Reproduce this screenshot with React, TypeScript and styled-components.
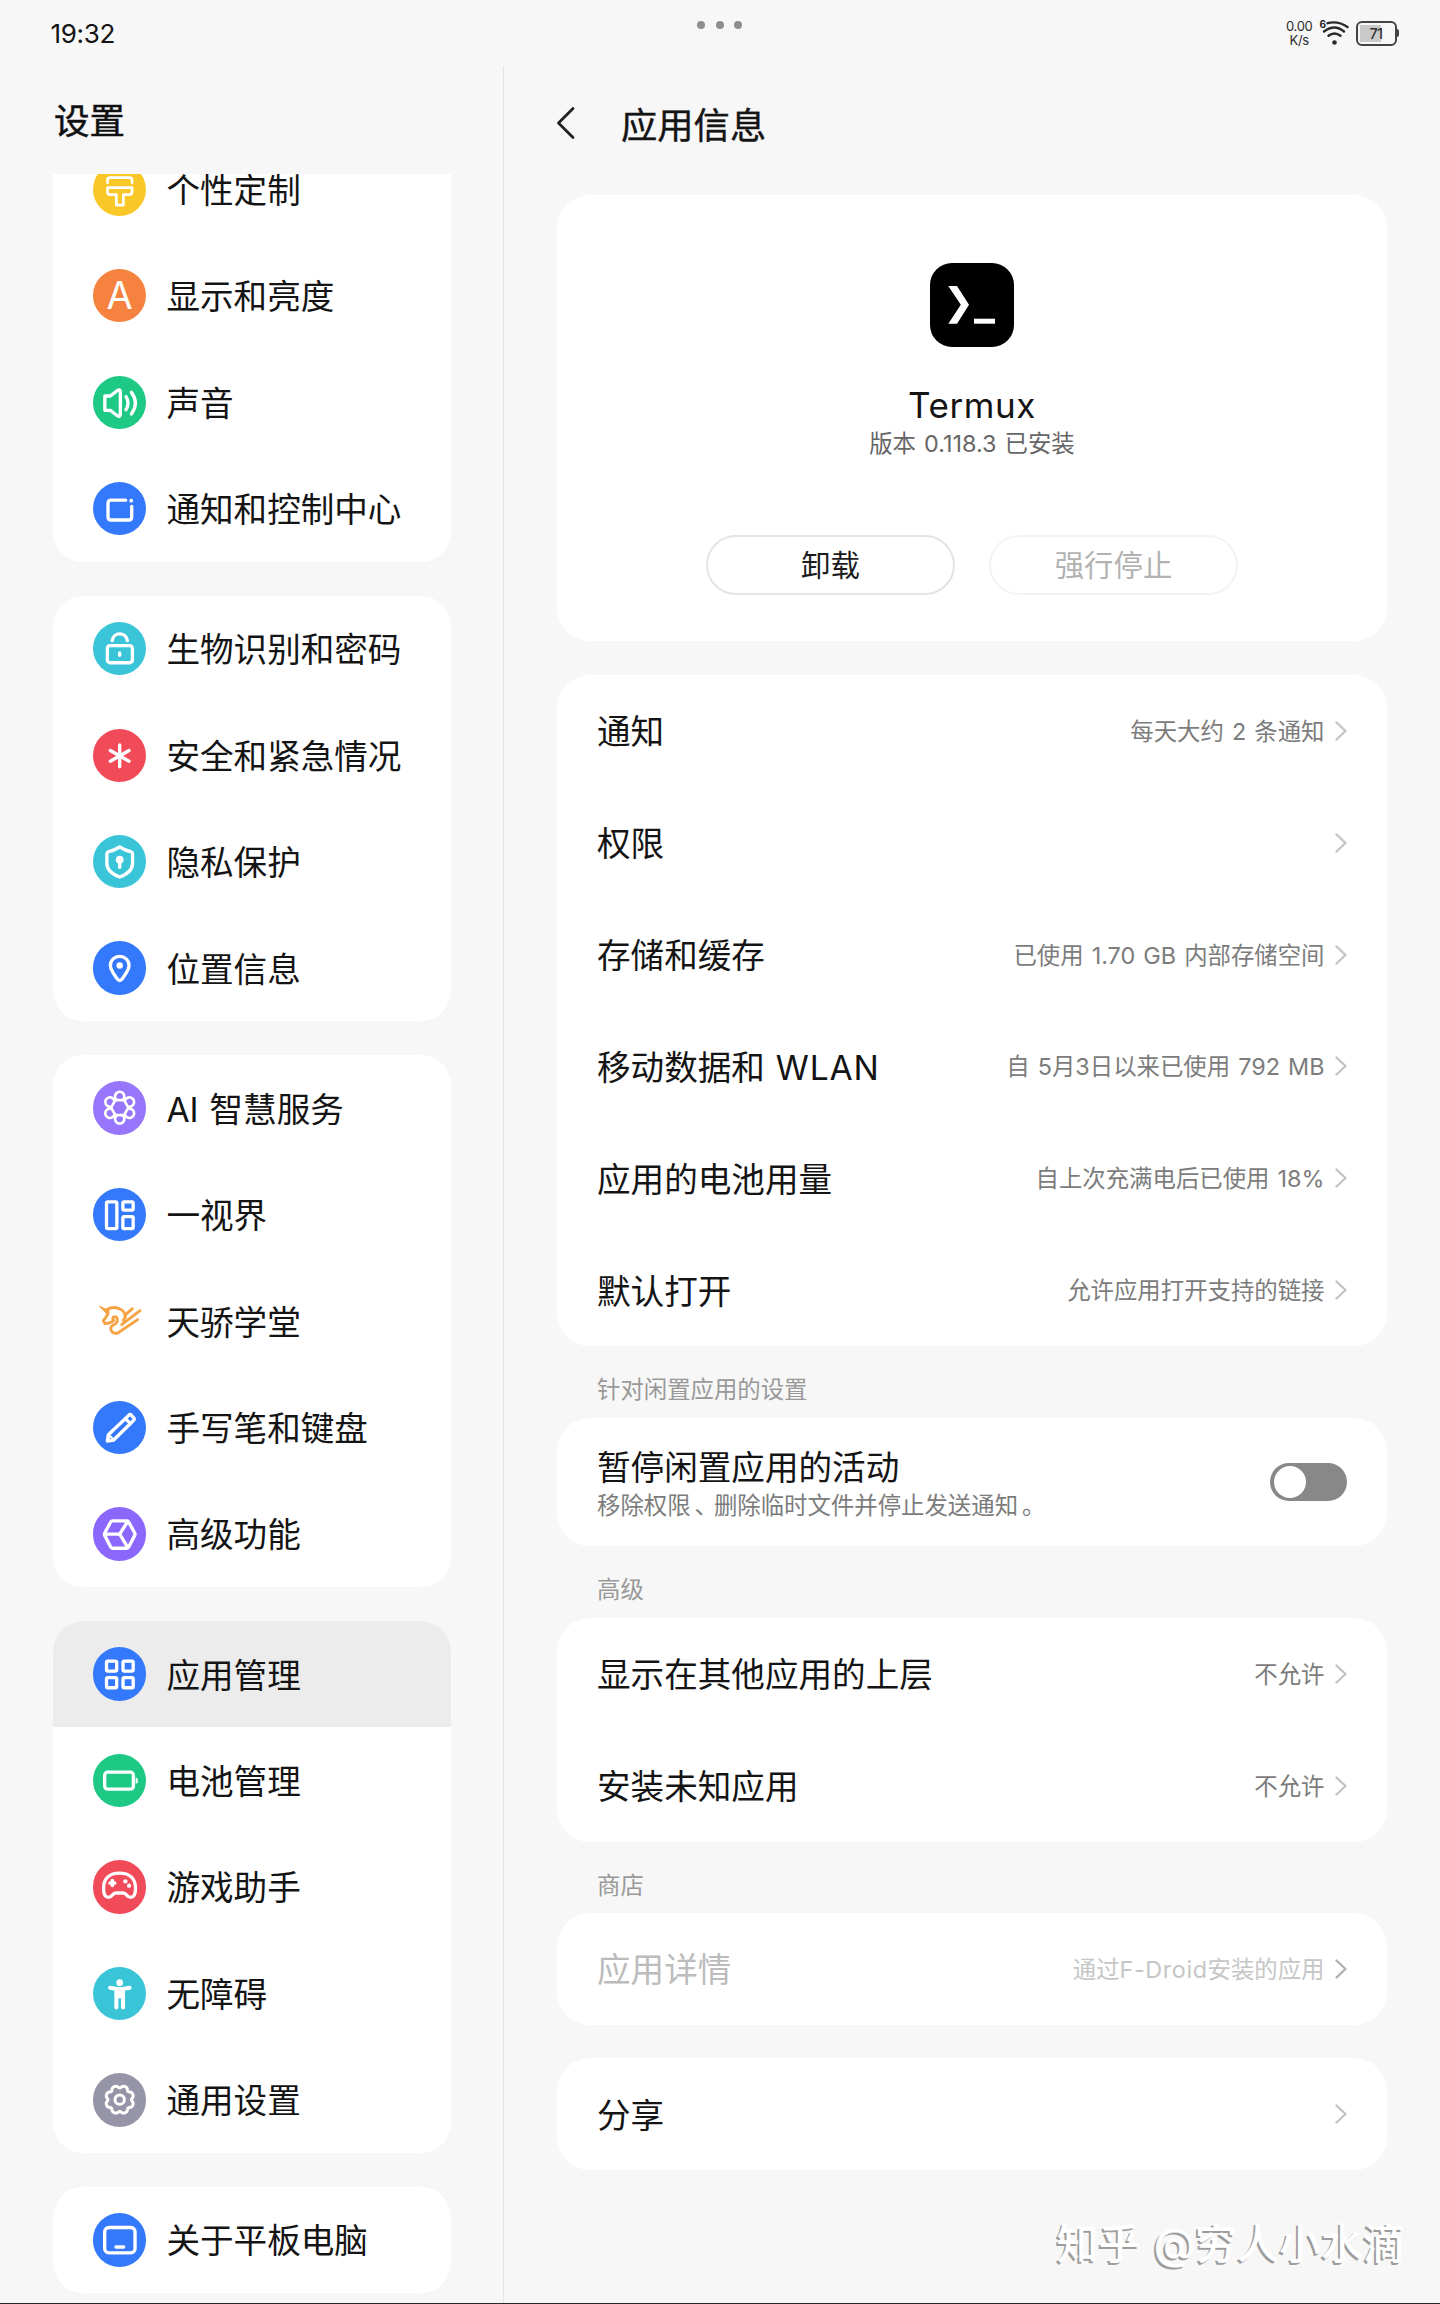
import React from 'react';
import styled, { createGlobalStyle, css } from 'styled-components';

const GlobalStyle = createGlobalStyle`
  * { box-sizing: border-box; }
  html, body { margin: 0; padding: 0; background: #f7f7f7; }
  body {
    font-family: Inter, "Noto Sans CJK SC", sans-serif;
    color: #141414;
    word-spacing: 1.5px;
    -webkit-font-smoothing: antialiased;
  }
`;

const Screen = styled.div`
  position: relative;
  width: 1440px;
  height: 2304px;
  overflow: hidden;
  display: flex;
  flex-direction: column;
  background: #f7f7f7;
  border-bottom: 1px solid #2a2a2a;
`;

/* ---------- status bar ---------- */

const StatusBar = styled.header`
  flex: none;
  height: 66px;
  padding: 0 41px 0 50.5px;
  display: grid;
  grid-template-columns: 1fr auto 1fr;
`;

const Clock = styled.div`
  font-size: 26px;
  line-height: 34px;
  padding-top: 17px;
  letter-spacing: -0.3px;
`;

const Dots = styled.div`
  display: flex;
  gap: 10.5px;
  padding-top: 21px;
  margin-left: -10px;
`;

const Dot = styled.i`
  width: 8px;
  height: 8px;
  border-radius: 50%;
  background: #8e8e8e;
`;

const StatusRight = styled.div`
  display: flex;
  justify-content: flex-end;
  align-items: flex-start;
`;

const NetSpeed = styled.div`
  margin: 20px 7px 0 0;
  font-size: 13px;
  line-height: 13.8px;
  text-align: center;
  letter-spacing: -0.3px;
  color: #2b2b2b;
`;

const WifiWrap = styled.div`
  display: flex;
  margin: 20px 6.5px 0 0;
`;

const WifiGen = styled.span`
  font-size: 10px;
  line-height: 8px;
  font-weight: 700;
  margin-right: -5px;
  color: #222;
`;

const Battery = styled.div`
  display: flex;
  align-items: center;
  margin-top: 20.5px;
`;

const BatteryCell = styled.div`
  width: 41px;
  height: 25px;
  border: 2.5px solid #444;
  border-radius: 6px;
  display: flex;
  align-items: center;
  justify-content: center;
  font-size: 14.5px;
  font-weight: 500;
  letter-spacing: -0.6px;
  color: #333;
  background: linear-gradient(#c9c9c9, #c9c9c9) 2px 2px / 21px calc(100% - 4px) no-repeat;
`;

const BatteryNub = styled.div`
  width: 2.5px;
  height: 8px;
  border-radius: 0 2px 2px 0;
  background: #444;
`;

/* ---------- layout ---------- */

const Body = styled.div`
  flex: 1;
  min-height: 0;
  display: flex;
`;

const Sidebar = styled.nav`
  flex: none;
  width: 504px;
  border-right: 1px solid #e4e4e4;
  padding: 0 52px 0 53px;
  display: flex;
  flex-direction: column;
`;

const SidebarTitle = styled.h1`
  flex: none;
  margin: 0;
  height: 108px;
  padding: 36px 0 0 1px;
  font-size: 35.5px;
  line-height: 40px;
  font-weight: 400;
  -webkit-text-stroke: 0.5px #101010;
  color: #101010;
`;

const SidebarScroll = styled.div`
  flex: 1;
  min-height: 0;
  overflow: hidden;
`;

const SidebarList = styled.div`
  margin-top: -37.9px;
  display: flex;
  flex-direction: column;
  gap: 33.6px;
`;

const NavCard = styled.section`
  border-radius: 30px;
  background: #fff;
  overflow: hidden;
`;

const NavItem = styled.div<{ $active?: boolean }>`
  height: 106.46px;
  padding-left: 40px;
  display: flex;
  align-items: center;
  gap: 20px;
  background: ${(p) => (p.$active ? '#ececec' : 'transparent')};
`;

const NavLabel = styled.span`
  font-size: 33.6px;
  line-height: 32px;
  padding-top: 3px;
  white-space: nowrap;
`;

const Badge = styled.div<{ $color: string }>`
  flex: none;
  width: 53.4px;
  height: 53.4px;
  border-radius: 50%;
  background: ${(p) => p.$color};
  display: flex;
  align-items: center;
  justify-content: center;
  svg {
    width: 100%;
    height: 100%;
    fill: none;
    stroke: #fff;
    stroke-width: 10;
    stroke-linecap: round;
    stroke-linejoin: round;
  }
`;

const BadgeLetter = styled.span`
  font-size: 38px;
  line-height: 53px;
  font-weight: 400;
  color: #fff;
`;

/* ---------- detail pane ---------- */

const Detail = styled.main`
  flex: 1;
  min-width: 0;
  padding: 0 53px 0 53px;
`;

const DetailHeader = styled.div`
  height: 128.8px;
  padding: 38px 0 0 0;
  display: flex;
  align-items: flex-start;
  gap: 44px;
  svg {
    margin: 2px 1px 0 -1px;
  }
`;

const DetailTitle = styled.h2`
  margin: 0;
  font-size: 36.3px;
  line-height: 44px;
  font-weight: 400;
  -webkit-text-stroke: 0.4px #141414;
`;

const Card = styled.section`
  border-radius: 33px;
  background: #fff;
`;

const AppCard = styled(Card)`
  height: 446.5px;
  padding-top: 68.2px;
  display: flex;
  flex-direction: column;
  align-items: center;
  margin-bottom: 33.5px;
`;

const AppIcon = styled.div`
  width: 84px;
  height: 84px;
  border-radius: 22px;
  background: #000;
  svg { display: block; }
`;

const AppName = styled.div`
  margin-top: 37px;
  font-size: 35px;
  line-height: 42px;
  letter-spacing: 0.6px;
`;

const AppVersion = styled.div`
  margin-top: 3px;
  font-size: 23.4px;
  line-height: 30px;
  color: #666;
`;

const Actions = styled.div`
  margin-top: 76px;
  display: flex;
  gap: 34px;
`;

const ActionButton = styled.button<{ $disabled?: boolean }>`
  width: 249px;
  height: 60px;
  border-radius: 30px;
  padding: 2px 0 0;
  background: #fff;
  border: 2px solid ${(p) => (p.$disabled ? '#f3f3f3' : '#e4e4e4')};
  font: inherit;
  font-size: 29.4px;
  line-height: 54px;
  color: ${(p) => (p.$disabled ? '#b2b2b2' : '#1c1c1c')};
`;

const Row = styled.div<{ $disabled?: boolean }>`
  height: 111.9px;
  padding: 0 40.5px 0 40px;
  display: flex;
  align-items: center;
  ${(p) => p.$disabled && css`color: #bcbcbc;`}
`;

const RowLabel = styled.div`
  flex: 1;
  font-size: 33.6px;
  line-height: 40px;
  padding-top: 3px;
  white-space: nowrap;
`;

const RowValue = styled.div<{ $disabled?: boolean }>`
  font-size: 23.4px;
  line-height: 30px;
  padding-top: 2px;
  color: ${(p) => (p.$disabled ? '#c6c6c6' : '#7c7c7c')};
  white-space: nowrap;
  margin-right: 8px;
`;

const Latin = styled.span`
  letter-spacing: 0.025em;
`;

const SectionTitle = styled.h3`
  margin: 0;
  height: 71.4px;
  padding: 29px 0 0 40px;
  font-size: 23.4px;
  line-height: 30px;
  font-weight: 400;
  color: #999;
`;

const SwitchRow = styled.div`
  height: 128.8px;
  padding: 0 40px;
  display: flex;
  align-items: center;
  justify-content: space-between;
`;

const SwitchText = styled.div`
  display: flex;
  flex-direction: column;
  padding-top: 7px;
`;

const SwitchTitle = styled.div`
  font-size: 33.6px;
  line-height: 42px;
`;

const SwitchHint = styled.div`
  font-size: 23.4px;
  line-height: 34px;
  color: #7c7c7c;
  white-space: nowrap;
`;

const Mark = styled.span`
  padding-left: 4px;
  letter-spacing: -4px;
`;

const Toggle = styled.div`
  width: 77px;
  height: 38.5px;
  border-radius: 20px;
  background: #888;
  padding: 3px 3.5px;
`;

const Knob = styled.div`
  width: 32.5px;
  height: 32.5px;
  border-radius: 50%;
  background: #fff;
`;

const Gap = styled.div`
  height: 33.5px;
`;

const Watermark = styled.div`
  position: absolute;
  right: 35px;
  bottom: 31px;
  font-size: 42px;
  line-height: 56px;
  font-weight: 500;
  color: #fff;
  text-shadow: -2px 2px 0.5px #9c9c9c;
  word-spacing: 2px;
  white-space: nowrap;
`;

/* ---------- icons (160 unit grid) ---------- */

const petals = [0, 60, 120, 180, 240, 300];

const gearPath = (() => {
  let d = '';
  for (let i = 0; i <= 144; i++) {
    const t = (i / 144) * Math.PI * 2;
    const r = 39.5 + 3.6 * Math.cos(8 * (t - Math.PI / 8)) - 0.8 * Math.cos(16 * (t - Math.PI / 8));
    d += `${i ? 'L' : 'M'}${(80 + r * Math.sin(t)).toFixed(2)} ${(80 - r * Math.cos(t)).toFixed(2)}`;
  }
  return d + 'Z';
})();

const icons: Record<string, React.ReactNode> = {
  brush: (
    <>
      <path d="M43.5 60V52q0-8 8-8H109q8 0 8 8V60" strokeWidth={8} />
      <path d="M43.5 74H117V87q0 8-8 8H91V126H70V95H51.5q-8 0-8-8Z" strokeWidth={8} />
    </>
  ),
  sound: (
    <>
      <path d="M35.5 60H52L73 43.5Q82 38 82 48V114Q82 125 73 119L52 103H35.5Z" />
      <path d="M99 62Q111 81 99 101" />
      <path d="M115 49Q139 81 115 114" />
    </>
  ),
  panel: (
    <>
      <path d="M98 54.5H54q-9 0-9 9V105q0 9 9 9H107q9 0 9-9V73" />
      <circle cx="114.5" cy="56" r="5.5" fill="#fff" stroke="none" />
    </>
  ),
  lock: (
    <>
      <rect x="43" y="71" width="75" height="51" rx="8" />
      <path d="M57.5 56C59 43 69 35.5 80 35.5S101 43 103 56" />
      <path d="M80 93V100" />
    </>
  ),
  star: <path d="M80 48V113M52 64.5L108 96.5M108 64.5L52 96.5" />,
  shield: (
    <>
      <path d="M80 36Q98 47 113 50Q118.500 52 118.500 58V85Q118.500 112 80 126Q41.500 112 41.500 85V58Q41.500 52 47 50Q62 47 80 36Z" />
      <circle cx="80" cy="74" r="11.500" fill="#fff" stroke="none" />
      <path d="M80 78V97" />
    </>
  ),
  pin: (
    <>
      <path d="M80 46C95 46 108 57 108 73C108 89 96 100 87 114Q80 123 73 114C64 100 52 89 52 73C52 57 65 46 80 46Z" />
      <circle cx="80" cy="73.500" r="9.500" fill="#fff" stroke="none" />
    </>
  ),
  ai: (
    <g strokeWidth={8}>
      {petals.map((a) => (
        <path key={a} d="M-13 -22.500H13M-9 -23A14 14 0 1 1 9 -23" transform={`translate(80 80) rotate(${a})`} />
      ))}
    </g>
  ),
  views: (
    <>
      <rect x="40.500" y="41.500" width="31" height="80" rx="4" />
      <rect x="89.500" y="41.500" width="31" height="25" rx="4" />
      <rect x="89.500" y="86" width="31" height="35.500" rx="4" />
    </>
  ),
  unicorn: (
    <g stroke="#f6a343" strokeWidth={8.5}>
      <path d="M20 37L46 49L41 58Z" fill="#f6a343" strokeWidth={3} />
      <path d="M40 47Q64 34 84 47Q98 56 97 70L91 79" />
      <path d="M46 53Q46 62 37 72L31 80L36 89L47 87" />
      <path d="M47 87Q58 85 62 79Q57 75 61 69Q71 65 73 76Q74 88 59 94Q50 100 55 110Q61 120 74 117L134 77" />
      <path d="M86 92L141 50" />
      <path d="M95 64L118 44" />
    </g>
  ),
  pencil: (
    <>
      <path d="M107 43Q111 38 115 43L122 50Q126 54 121 59L62 117L43 120L46 101Z" />
      <path d="M97 53L112 68" />
      <path d="M50 104L60 114L44 119Z" strokeWidth={6} />
    </>
  ),
  cube: (
    <path d="M58 41.500H102Q105 41.500 107 45L125 78Q127 81.500 125 85L107 120Q105 123.500 102 123.500H58Q55 123.500 53 120L35 85Q33 81.500 35 78L53 45Q55 41.500 58 41.500ZM80 81.500L104 43M80 81.500L104 121M80 81.500H35" />
  ),
  grid: (
    <>
      <rect x="40.500" y="42.500" width="30.500" height="30" rx="4" />
      <rect x="90" y="42.500" width="30.500" height="30" rx="4" />
      <rect x="40.500" y="92" width="30.500" height="30" rx="4" />
      <rect x="90" y="92" width="30.500" height="30" rx="4" />
    </>
  ),
  battery: (
    <>
      <rect x="35" y="54.500" width="86" height="51" rx="9" />
      <path d="M128 70Q135 73 135 80T128 90Z" fill="#fff" stroke="none" />
    </>
  ),
  gamepad: (
    <>
      <path d="M31.500 85C31.500 55 50 39.500 79.500 39.500S127.500 55 127.500 85C127.500 101 124 112 113 112C101 112 101 99 91 99H68C58 99 58 112 46 112C35 112 31.500 101 31.500 85Z" />
      <path d="M58 62V76M51 69H65" strokeWidth={11} />
      <circle cx="97" cy="64" r="6.500" fill="#fff" stroke="none" />
      <circle cx="108" cy="77" r="6.500" fill="#fff" stroke="none" />
    </>
  ),
  person: (
    <g>
      <circle cx="80" cy="47" r="10" fill="#fff" stroke="none" />
      <path d="M51 62L72 66H88L110 62" strokeWidth={12} />
      <path d="M70 66V121M90 66V121" strokeWidth={12} />
      <path d="M68 62H92V94H68Z" fill="#fff" stroke="none" />
    </g>
  ),
  gear: (
    <>
      <path d={gearPath} strokeWidth={9} />
      <circle cx="80" cy="80" r="14" strokeWidth={9} />
    </>
  ),
  tablet: (
    <>
      <rect x="35" y="43.500" width="91" height="76" rx="13" />
      <path d="M69 102H92" />
    </>
  ),
};

const Chevron = ({ strong }: { strong?: boolean }) => (
  <svg width="14" height="22" viewBox="0 0 14 22" fill="none">
    <path d="M3.500 2.500L12.500 11L3.500 19.500" stroke={strong ? '#b0b0b0' : '#c4c4c4'} strokeWidth="2.400" strokeLinecap="round" strokeLinejoin="round" />
  </svg>
);

/* ---------- data ---------- */

type Nav = { icon: string; color: string; label: string; active?: boolean };

const BLUE = '#3478fb';
const CYAN = '#3ac4d8';
const RED = '#f14a58';
const GREEN = '#1ec985';

const navGroups: Nav[][] = [
  [
    { icon: 'brush', color: '#f9c828', label: '个性定制' },
    { icon: 'letter', color: '#f6823f', label: '显示和亮度' },
    { icon: 'sound', color: GREEN, label: '声音' },
    { icon: 'panel', color: BLUE, label: '通知和控制中心' },
  ],
  [
    { icon: 'lock', color: CYAN, label: '生物识别和密码' },
    { icon: 'star', color: RED, label: '安全和紧急情况' },
    { icon: 'shield', color: CYAN, label: '隐私保护' },
    { icon: 'pin', color: BLUE, label: '位置信息' },
  ],
  [
    { icon: 'ai', color: '#9776fb', label: 'AI 智慧服务' },
    { icon: 'views', color: BLUE, label: '一视界' },
    { icon: 'unicorn', color: 'transparent', label: '天骄学堂' },
    { icon: 'pencil', color: BLUE, label: '手写笔和键盘' },
    { icon: 'cube', color: '#8c67fb', label: '高级功能' },
  ],
  [
    { icon: 'grid', color: BLUE, label: '应用管理', active: true },
    { icon: 'battery', color: GREEN, label: '电池管理' },
    { icon: 'gamepad', color: RED, label: '游戏助手' },
    { icon: 'person', color: CYAN, label: '无障碍' },
    { icon: 'gear', color: '#9695a8', label: '通用设置' },
  ],
  [{ icon: 'tablet', color: BLUE, label: '关于平板电脑' }],
];

type Info = { id: string; label: React.ReactNode; value?: React.ReactNode; disabled?: boolean };

const mainRows: Info[] = [
  { id: 'notify', label: '通知', value: '每天大约 2 条通知' },
  { id: 'permission', label: '权限' },
  { id: 'storage', label: '存储和缓存', value: '已使用 1.70 GB 内部存储空间' },
  { id: 'data', label: <>移动数据和 <Latin>WLAN</Latin></>, value: '自 5月3日以来已使用 792 MB' },
  { id: 'battery', label: '应用的电池用量', value: '自上次充满电后已使用 18%' },
  { id: 'open', label: '默认打开', value: '允许应用打开支持的链接' },
];

const advancedRows: Info[] = [
  { id: 'overlay', label: '显示在其他应用的上层', value: '不允许' },
  { id: 'unknown', label: '安装未知应用', value: '不允许' },
];

const InfoRow = ({ label, value, disabled }: Omit<Info, 'id'>) => (
  <Row $disabled={disabled}>
    <RowLabel>{label}</RowLabel>
    {value ? <RowValue $disabled={disabled}>{value}</RowValue> : null}
    <Chevron strong={disabled} />
  </Row>
);

export default function App() {
  return (
    <>
      <GlobalStyle />
      <Screen>
        <StatusBar>
          <Clock>19:32</Clock>
          <Dots>
            <Dot />
            <Dot />
            <Dot />
          </Dots>
          <StatusRight>
            <NetSpeed>
              0.00
              <br />
              K/s
            </NetSpeed>
            <WifiWrap>
              <WifiGen>6</WifiGen>
              <svg width="28" height="26" viewBox="0 0 28 26" fill="none" stroke="#2a2a2a" strokeWidth="2.400" strokeLinecap="round">
                <path d="M6.500 3.200Q17 0.500 26.500 7" />
                <path d="M3 11.500Q13.500 3.500 23 11.500" />
                <path d="M7.500 15.800Q13.500 11 19.500 15.800" />
                <circle cx="13.500" cy="22.500" r="2.300" fill="#2a2a2a" stroke="none" />
              </svg>
            </WifiWrap>
            <Battery>
              <BatteryCell>71</BatteryCell>
              <BatteryNub />
            </Battery>
          </StatusRight>
        </StatusBar>

        <Body>
          <Sidebar>
            <SidebarTitle>设置</SidebarTitle>
            <SidebarScroll>
              <SidebarList>
                {navGroups.map((group, i) => (
                  <NavCard key={i}>
                    {group.map((item) => (
                      <NavItem key={item.label} $active={item.active}>
                        <Badge $color={item.color}>
                          {item.icon === 'letter' ? (
                            <BadgeLetter>A</BadgeLetter>
                          ) : (
                            <svg viewBox="0 0 160 160">{icons[item.icon]}</svg>
                          )}
                        </Badge>
                        <NavLabel>{item.label}</NavLabel>
                      </NavItem>
                    ))}
                  </NavCard>
                ))}
              </SidebarList>
            </SidebarScroll>
          </Sidebar>

          <Detail>
            <DetailHeader>
              <svg width="20" height="34" viewBox="0 0 20 34" fill="none">
                <path d="M17 2.500L2.500 17L17 31.500" stroke="#222" strokeWidth="2.800" strokeLinecap="round" strokeLinejoin="round" />
              </svg>
              <DetailTitle>应用信息</DetailTitle>
            </DetailHeader>

            <AppCard>
              <AppIcon>
                <svg width="84" height="84" viewBox="0 0 84 84" fill="#fff">
                  <path d="M18.300 23H27L39 41.800L27 60.700H18.300L30.800 41.800Z" />
                  <rect x="44" y="55.700" width="21" height="5" />
                </svg>
              </AppIcon>
              <AppName>Termux</AppName>
              <AppVersion>版本 0.118.3 已安装</AppVersion>
              <Actions>
                <ActionButton>卸载</ActionButton>
                <ActionButton $disabled>强行停止</ActionButton>
              </Actions>
            </AppCard>

            <Card>
              {mainRows.map(({ id, ...row }) => (
                <InfoRow key={id} {...row} />
              ))}
            </Card>

            <SectionTitle>针对闲置应用的设置</SectionTitle>
            <Card>
              <SwitchRow>
                <SwitchText>
                  <SwitchTitle>暂停闲置应用的活动</SwitchTitle>
                  <SwitchHint>
                    移除权限<Mark>、</Mark>删除临时文件并停止发送通知<Mark>。</Mark>
                  </SwitchHint>
                </SwitchText>
                <Toggle>
                  <Knob />
                </Toggle>
              </SwitchRow>
            </Card>

            <SectionTitle>高级</SectionTitle>
            <Card>
              {advancedRows.map(({ id, ...row }) => (
                <InfoRow key={id} {...row} />
              ))}
            </Card>

            <SectionTitle>商店</SectionTitle>
            <Card>
              <InfoRow label="应用详情" value={<>通过<Latin>F-Droid</Latin>安装的应用</>} disabled />
            </Card>
            <Gap />
            <Card>
              <InfoRow label="分享" />
            </Card>
          </Detail>
        </Body>
        <Watermark>知乎 @穷人小水滴</Watermark>
      </Screen>
    </>
  );
}
